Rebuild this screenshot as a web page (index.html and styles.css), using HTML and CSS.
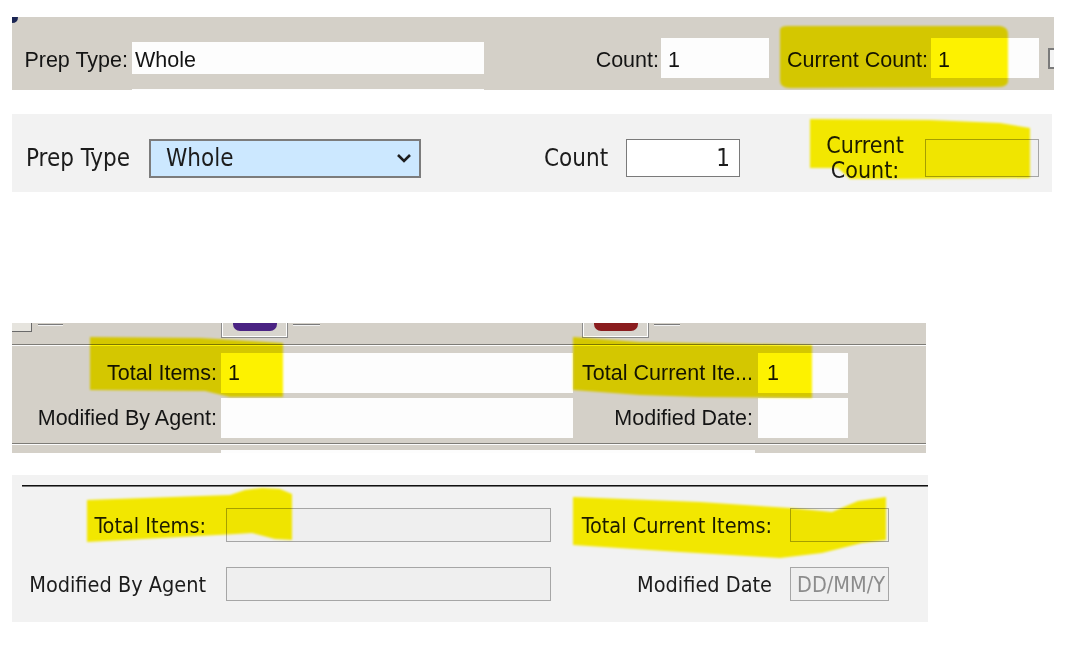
FILE: index.html
```html
<!DOCTYPE html>
<html>
<head>
<meta charset="utf-8">
<title>Prep form comparison</title>
<link rel="stylesheet" href="styles.css">
</head>
<body>
<div class="page">
  <section class="p1">
    <div class="p1-row">
      <div class="lbl l-prep">Prep Type:</div>
      <div class="fld in-wide">Whole</div>
      <div class="lbl l-count">Count:</div>
      <div class="fld in-sm">1</div>
      <div class="lbl l-cur">Current Count:</div>
      <div class="fld in-sm">1</div>
      <div class="chk"></div>
    </div>
    <div class="p1-row2"><div class="fld in-wide"></div></div>
  </section>

  <section class="p2">
    <div class="lbl l-prep">Prep Type</div>
    <div class="sel"><span>Whole</span>
      <svg class="chev" width="16" height="10" viewBox="0 0 16 10"><polyline points="2,2 8,8 14,2" fill="none" stroke="#1e1e1e" stroke-width="2.6"/></svg>
    </div>
    <div class="lbl l-count">Count</div>
    <div class="fld in-count">1</div>
    <div class="lbl l-cur"><span class="ln">Current</span><span class="ln">Count:</span></div>
    <div class="fld in-cur"></div>
  </section>

  <section class="p3">
    <div class="tb">
      <div class="tb-box"></div>
      <div class="tb-line la"></div>
      <div class="tb-btn bp"><div class="blob purple"></div></div>
      <div class="tb-line lb"></div>
      <div class="tb-btn br"><div class="blob red"></div></div>
      <div class="tb-line lc"></div>
    </div>
    <div class="sep"></div>
    <div class="p3-row first">
      <div class="lbl l1">Total Items:</div>
      <div class="fld inA">1</div>
      <div class="lbl l2">Total Current Ite...</div>
      <div class="fld inB">1</div>
    </div>
    <div class="p3-row">
      <div class="lbl l1">Modified By Agent:</div>
      <div class="fld inA"></div>
      <div class="lbl l2">Modified Date:</div>
      <div class="fld inB"></div>
    </div>
    <div class="sep sep2"></div>
    <div class="p3-tail"></div>
  </section>

  <section class="p4">
    <div class="rule"></div>
    <div class="p4-row first">
      <div class="lbl l1">Total Items:</div>
      <div class="fld inA"></div>
      <div class="lbl l2">Total Current Items:</div>
      <div class="fld inB"></div>
    </div>
    <div class="p4-row second">
      <div class="lbl l1">Modified By Agent</div>
      <div class="fld inA"></div>
      <div class="lbl l2">Modified Date</div>
      <div class="fld inB ph">DD/MM/Y</div>
    </div>
  </section>

  <svg class="marks" width="1071" height="649" viewBox="0 0 1071 649">
    <defs><filter id="soft" x="-5%" y="-5%" width="110%" height="110%"><feGaussianBlur stdDeviation="0.8"/></filter></defs>
    <g fill="#fff400" filter="url(#soft)">
      <path d="M780,30 Q780,26 788,26 L1000,26 Q1008,27 1008,34 L1008,82 Q1007,87 998,87 L790,88 Q780,88 780,80 Z"/>
      <path d="M810,119 L930,120 L1000,123 L1030,128 L1030,178 L900,179 L850,179 L838,168 L810,168 Z"/>
      <path d="M90,337 L200,338 L283,343 L283,397 L230,397 L205,391 L90,390 Z"/>
      <path d="M573,337 L640,342 L812,345 L812,398 L700,397 L640,395 L573,390 Z"/>
      <path d="M87,500 L230,495 L245,490 L262,488 L280,489 L292,494 L292,540 L275,539 L252,533 L236,534 L87,542 Z"/>
      <path d="M573,497 L700,502 L790,508 L832,512 L858,501 L886,497 L886,540 L862,543 L822,553 L780,558 L680,552 L573,545 Z"/>
    </g>
    <path d="M12,17 L18,17 Q18,23 12,23 Z" fill="#1f2d6a"/>
  </svg>
</div>
</body>
</html>
```
FILE: styles.css
```css
* { box-sizing: border-box; }
body { margin: 0; background: #ffffff; }

.page {
  position: relative;
  width: 1071px;
  height: 649px;
  padding: 17px 0 0 12px;
  overflow: hidden;
}

.lbl { flex: none; white-space: nowrap; }
.fld { flex: none; display: flex; align-items: center; white-space: nowrap; overflow: hidden; }

/* ---------- panel 1 (classic grey) ---------- */
.p1 {
  width: 1042px;
  height: 73px;
  background: #d4d0c8;
  overflow: hidden;
  font-family: "Liberation Sans", Arial, sans-serif;
  font-size: 21.5px;
  color: #141414;
}
.p1-row { display: flex; align-items: center; height: 40px; margin-top: 21px; }
.p1-row .lbl, .p1-row .fld { padding-top: 4px; }
.p1-row2 { display: flex; margin-top: 11px; padding-left: 120px; }
.p1 .l-prep { width: 120px; padding-right: 4px; text-align: right; }
.p1 .in-wide { width: 352px; height: 32px; background: #fdfdfd; padding-left: 3px; }
.p1 .l-count { width: 177px; padding-right: 2px; text-align: right; }
.p1 .in-sm { width: 108px; height: 40px; background: #fdfdfd; padding-left: 7px; }
.p1 .l-cur { width: 162px; padding-right: 3px; text-align: right; }
.p1 .chk {
  flex: none;
  width: 20px;
  height: 21px;
  margin-left: 9px;
  border: 2px solid #7a7a7a;
  background: #f4f4f4;
}

/* ---------- panel 2 (modern light) ---------- */
.p2 {
  width: 1040px;
  height: 78px;
  margin-top: 24px;
  padding-top: 10px;
  background: #f2f2f2;
  display: flex;
  align-items: center;
  font-family: "DejaVu Sans Condensed", "Noto Sans", sans-serif;
  font-size: 24px;
  color: #1c1c1c;
}
.p2 .l-prep { margin-left: 14px; width: 123px; }
.sel {
  flex: none;
  width: 272px;
  height: 39px;
  background: #cce8ff;
  border: 2px solid #7c7c7c;
  padding: 0 7px 0 15px;
  display: flex;
  align-items: center;
  justify-content: space-between;
}
.chev { display: block; }
.p2 .l-count { margin-left: 123px; width: 82px; }
.p2 .in-count {
  width: 114px;
  height: 38px;
  background: #ffffff;
  border: 1px solid #7a7a7a;
  justify-content: flex-end;
  padding-right: 9px;
}
.p2 .l-cur {
  margin-left: 70px;
  width: 110px;
  display: flex;
  flex-direction: column;
  align-items: center;
  gap: 0;
  font-size: 23px;
}
.p2 .l-cur .ln { display: block; line-height: 25px; height: 25px; }
.p2 .in-cur {
  margin-left: 5px;
  width: 114px;
  height: 38px;
  background: #f0f0f0;
  border: 1px solid #a5a5a5;
}

/* ---------- panel 3 (classic grey) ---------- */
.p3 {
  width: 914px;
  height: 130px;
  margin-top: 131px;
  background: #d4d0c8;
  overflow: hidden;
  font-family: "Liberation Sans", Arial, sans-serif;
  font-size: 21.5px;
  color: #141414;
}
.tb { display: flex; align-items: flex-start; height: 21px; }
.tb-box {
  flex: none;
  width: 20px;
  height: 9px;
  background: #e6e4de;
  border-right: 1px solid #6a6a6a;
  border-bottom: 1px solid #6a6a6a;
}
.tb-line {
  flex: none;
  height: 2px;
  margin-top: 1px;
  border-top: 1px solid #7a7a7a;
  border-bottom: 1px solid #f2f2f2;
}
.tb-line.la { margin-left: 6px; width: 25px; }
.tb-line.lb { margin-left: 5px; width: 27px; }
.tb-line.lc { margin-left: 5px; width: 26px; }
.tb-btn {
  flex: none;
  width: 67px;
  height: 15px;
  background: #d8d5ce;
  border: 1px solid #8b8b8b;
  border-top: none;
  box-shadow: inset 1px 0 #ffffff, inset -1px -1px #ffffff;
  display: flex;
  justify-content: center;
}
.tb-btn.bp { margin-left: 158px; }
.tb-btn.br { margin-left: 262px; }
.blob { width: 44px; height: 8px; border-radius: 0 0 7px 7px; }
.blob.purple { background: #4a2383; }
.blob.red { background: #8a1c1e; }
.sep { height: 2px; border-top: 1px solid #7d7b76; border-bottom: 1px solid #fbfbfb; }
.sep2 { margin-top: 5px; }
.p3-row { display: flex; align-items: center; height: 40px; margin-top: 5px; }
.p3-row.first { margin-top: 7px; }
.p3 .l1 { width: 209px; padding-right: 4px; text-align: right; }
.p3 .inA { width: 352px; height: 40px; background: #fdfdfd; padding-left: 7px; }
.p3 .l2 { width: 185px; padding-right: 5px; text-align: right; }
.p3 .inB { width: 90px; height: 40px; background: #fdfdfd; padding-left: 9px; }
.p3-tail { margin: 5px 0 0 209px; width: 534px; height: 20px; background: #fdfdfd; }

/* ---------- panel 4 (modern light) ---------- */
.p4 {
  width: 916px;
  height: 147px;
  margin-top: 22px;
  padding-top: 10px;
  background: #f2f2f2;
  font-family: "DejaVu Sans Condensed", "Noto Sans", sans-serif;
  font-size: 21.5px;
  color: #1c1c1c;
}
.rule { margin-left: 10px; height: 2px; border-top: 1px solid #111111; border-bottom: 1px solid #777777; }
.p4-row { display: flex; align-items: center; height: 34px; }
.p4-row.first { margin-top: 21px; }
.p4-row.second { margin-top: 25px; }
.p4 .l1 { width: 214px; padding-right: 20px; text-align: right; }
.p4 .inA { width: 325px; height: 34px; background: #efefef; border: 1px solid #a6a6a6; }
.p4 .l2 { width: 239px; padding-right: 18px; text-align: right; }
.p4 .inB { width: 99px; height: 34px; background: #efefef; border: 1px solid #a6a6a6; padding-left: 6px; }
.p4 .ph { color: #8c8c8c; }

/* ---------- highlighter marks ---------- */
.marks {
  position: absolute;
  left: 0;
  top: 0;
  pointer-events: none;
  mix-blend-mode: multiply;
}
```
